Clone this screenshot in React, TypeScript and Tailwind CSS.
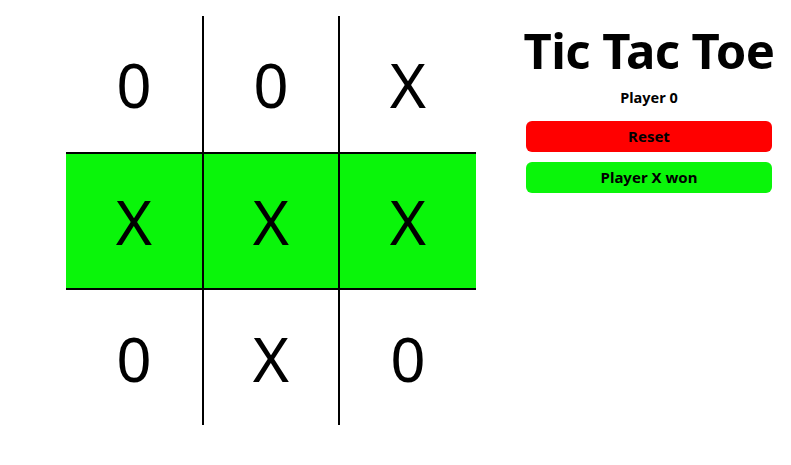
import { useState } from "react";

const board = ["0", "0", "X", "X", "X", "X", "0", "X", "0"];
const winLine = [3, 4, 5];

const Cell = ({ value, index }: { value: string; index: number }) => {
  const col = index % 3;
  const row = Math.floor(index / 3);
  const won = winLine.includes(index);
  return (
    <div
      className={[
        "flex items-center justify-center border-black text-[62px] leading-none text-black",
        col < 2 ? "border-r-2" : "",
        row < 2 ? "border-b-2" : "",
        won ? "bg-[#0af50a]" : "bg-white",
      ].join(" ")}
    >
      <span>{value}</span>
    </div>
  );
};

export default function App() {
  const [cells] = useState(board);

  return (
    <div
      className="flex h-[465px] w-[791px] items-start gap-[50px] bg-white pl-[66px] pt-[16px]"
      style={{ fontFamily: '"Noto Sans", "Open Sans", sans-serif' }}
    >
      <div className="grid w-[410px] grid-cols-[138px_136px_136px] grid-rows-[138px_136px_135px]">
        {cells.map((v, i) => (
          <Cell key={i} value={v} index={i} />
        ))}
      </div>

      <div className="flex w-[246px] flex-col items-center pt-[5px]">
        <h1 className="whitespace-nowrap text-[49px] font-bold leading-[58px] tracking-[-0.6px] text-black">
          Tic Tac Toe
        </h1>
        <p className="mt-[8px] whitespace-nowrap text-[14.5px] font-bold leading-5 text-black">Player 0</p>
        <button className="mt-[14px] h-[31px] w-full rounded-md bg-[#ff0000] text-[15px] font-bold text-black">
          Reset
        </button>
        <button className="mt-[10px] h-[31px] w-full rounded-md bg-[#0af50a] text-[15px] font-bold text-black">
          Player X won
        </button>
      </div>
    </div>
  );
}
